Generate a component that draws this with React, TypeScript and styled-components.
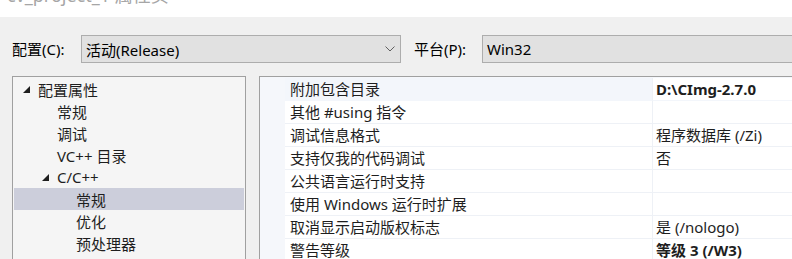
import React from 'react'
import styled, { createGlobalStyle } from 'styled-components'

const FONT = `"Noto Sans", "Noto Sans CJK SC", sans-serif`

const GlobalStyle = createGlobalStyle`
  html, body {
    margin: 0;
    padding: 0;
    background: #f0f0f0;
    overflow: hidden;
    font-family: ${FONT};
    color: #000;
  }
`

const TitleStrip = styled.div`
  height: 17px;
  background: #fff;
  overflow: hidden;
  padding-left: 7px;
`

const TitleText = styled.div`
  font-size: 18px;
  line-height: 22px;
  margin-top: -16px;
  color: #a6a6a6;
  white-space: nowrap;
`

const Toolbar = styled.div`
  display: flex;
  align-items: center;
  padding: 18px 0 0 12px;
  height: 28px;
  white-space: nowrap;
`

const Label = styled.span<{ $width: number }>`
  width: ${(p) => p.$width}px;
  font-size: 15px;
  line-height: 28px;
  flex: none;
`

const Combo = styled.div<{ $width: number; $gap?: number }>`
  box-sizing: border-box;
  width: ${(p) => p.$width}px;
  height: 28px;
  flex: none;
  display: flex;
  align-items: center;
  justify-content: space-between;
  padding: 0 5px 0 4px;
  margin-right: ${(p) => p.$gap ?? 0}px;
  background: #e1e1e1;
  border: 1px solid #adadad;
  font-size: 15px;
`

const Body = styled.div`
  display: flex;
  gap: 13px;
  padding: 13px 0 0 12px;
`

const Tree = styled.div`
  box-sizing: border-box;
  width: 234px;
  height: 200px;
  flex: none;
  padding: 1px;
  background: #f5f5f5;
  border: 1px solid #a0a0a0;
`

const TreeRow = styled.div<{ $level: number; $selected?: boolean }>`
  display: flex;
  align-items: center;
  height: 22px;
  padding-left: ${(p) => 9 + p.$level * 19}px;
  background: ${(p) => (p.$selected ? '#cccedb' : 'transparent')};
  font-size: 15px;
  color: #1e1e1e;
  white-space: nowrap;
`

const Twisty = styled.span`
  width: 15px;
  flex: none;
  display: flex;
  align-items: center;
`

const Grid = styled.div`
  box-sizing: border-box;
  width: 620px;
  height: 200px;
  flex: none;
  padding-top: 1px;
  background: #f5f7fb;
  border: 1px solid #a0a0a0;
  border-right: none;
`

const PropRow = styled.div<{ $current?: boolean }>`
  display: flex;
  height: 23px;
  padding-left: 25px;
  font-size: 15px;
  color: #1e1e1e;
  white-space: nowrap;

  & > div {
    background: ${(p) => (p.$current ? '#f3f6fb' : '#fff')};
    border-bottom: 1px solid ${(p) => (p.$current ? '#f3f6fb' : '#eef1f6')};
  }
`

const NameCell = styled.div`
  box-sizing: border-box;
  width: 368px;
  flex: none;
  padding-left: 5px;
  line-height: 22px;
  border-right: 1px solid #eef1f6;
`

const ValueCell = styled.div<{ $bold?: boolean }>`
  flex: 1;
  padding-left: 3px;
  line-height: 22px;
  font-weight: ${(p) => (p.$bold ? 700 : 400)};
  && {
    background: #fff;
  }
`

const Chevron = () => (
  <svg width="10" height="6" viewBox="0 0 10 6">
    <polyline points="0.5,0.5 5,5 9.5,0.5" fill="none" stroke="#606060" strokeWidth="1" />
  </svg>
)

const Triangle = () => (
  <svg width="7" height="7" viewBox="0 0 7 7">
    <polygon points="7,0 7,7 0,7" fill="#1e1e1e" />
  </svg>
)

const treeItems = [
  { text: '配置属性', level: 0, open: true },
  { text: '常规', level: 1 },
  { text: '调试', level: 1 },
  { text: 'VC++ 目录', level: 1 },
  { text: 'C/C++', level: 1, open: true },
  { text: '常规', level: 2, selected: true },
  { text: '优化', level: 2 },
  { text: '预处理器', level: 2 },
]

const props = [
  { name: '附加包含目录', value: 'D:\\CImg-2.7.0', bold: true, current: true },
  { name: '其他 #using 指令', value: '' },
  { name: '调试信息格式', value: '程序数据库 (/Zi)' },
  { name: '支持仅我的代码调试', value: '否' },
  { name: '公共语言运行时支持', value: '' },
  { name: '使用 Windows 运行时扩展', value: '' },
  { name: '取消显示启动版权标志', value: '是 (/nologo)' },
  { name: '警告等级', value: '等级 3 (/W3)', bold: true },
]

export default function App() {
  return (
    <>
      <GlobalStyle />
      <TitleStrip>
        <TitleText>cv_project_1 属性页</TitleText>
      </TitleStrip>
      <Toolbar>
        <Label $width={69}>配置(C):</Label>
        <Combo $width={320} $gap={13}>
          <span>活动(Release)</span>
          <Chevron />
        </Combo>
        <Label $width={68}>平台(P):</Label>
        <Combo $width={340}>
          <span>Win32</span>
        </Combo>
      </Toolbar>
      <Body>
        <Tree>
          {treeItems.map((item, i) => (
            <TreeRow key={i} $level={item.level} $selected={item.selected}>
              <Twisty>{item.open && <Triangle />}</Twisty>
              {item.text}
            </TreeRow>
          ))}
        </Tree>
        <Grid>
          {props.map((p, i) => (
            <PropRow key={i} $current={p.current}>
              <NameCell>{p.name}</NameCell>
              <ValueCell $bold={p.bold}>{p.value}</ValueCell>
            </PropRow>
          ))}
        </Grid>
      </Body>
    </>
  )
}
